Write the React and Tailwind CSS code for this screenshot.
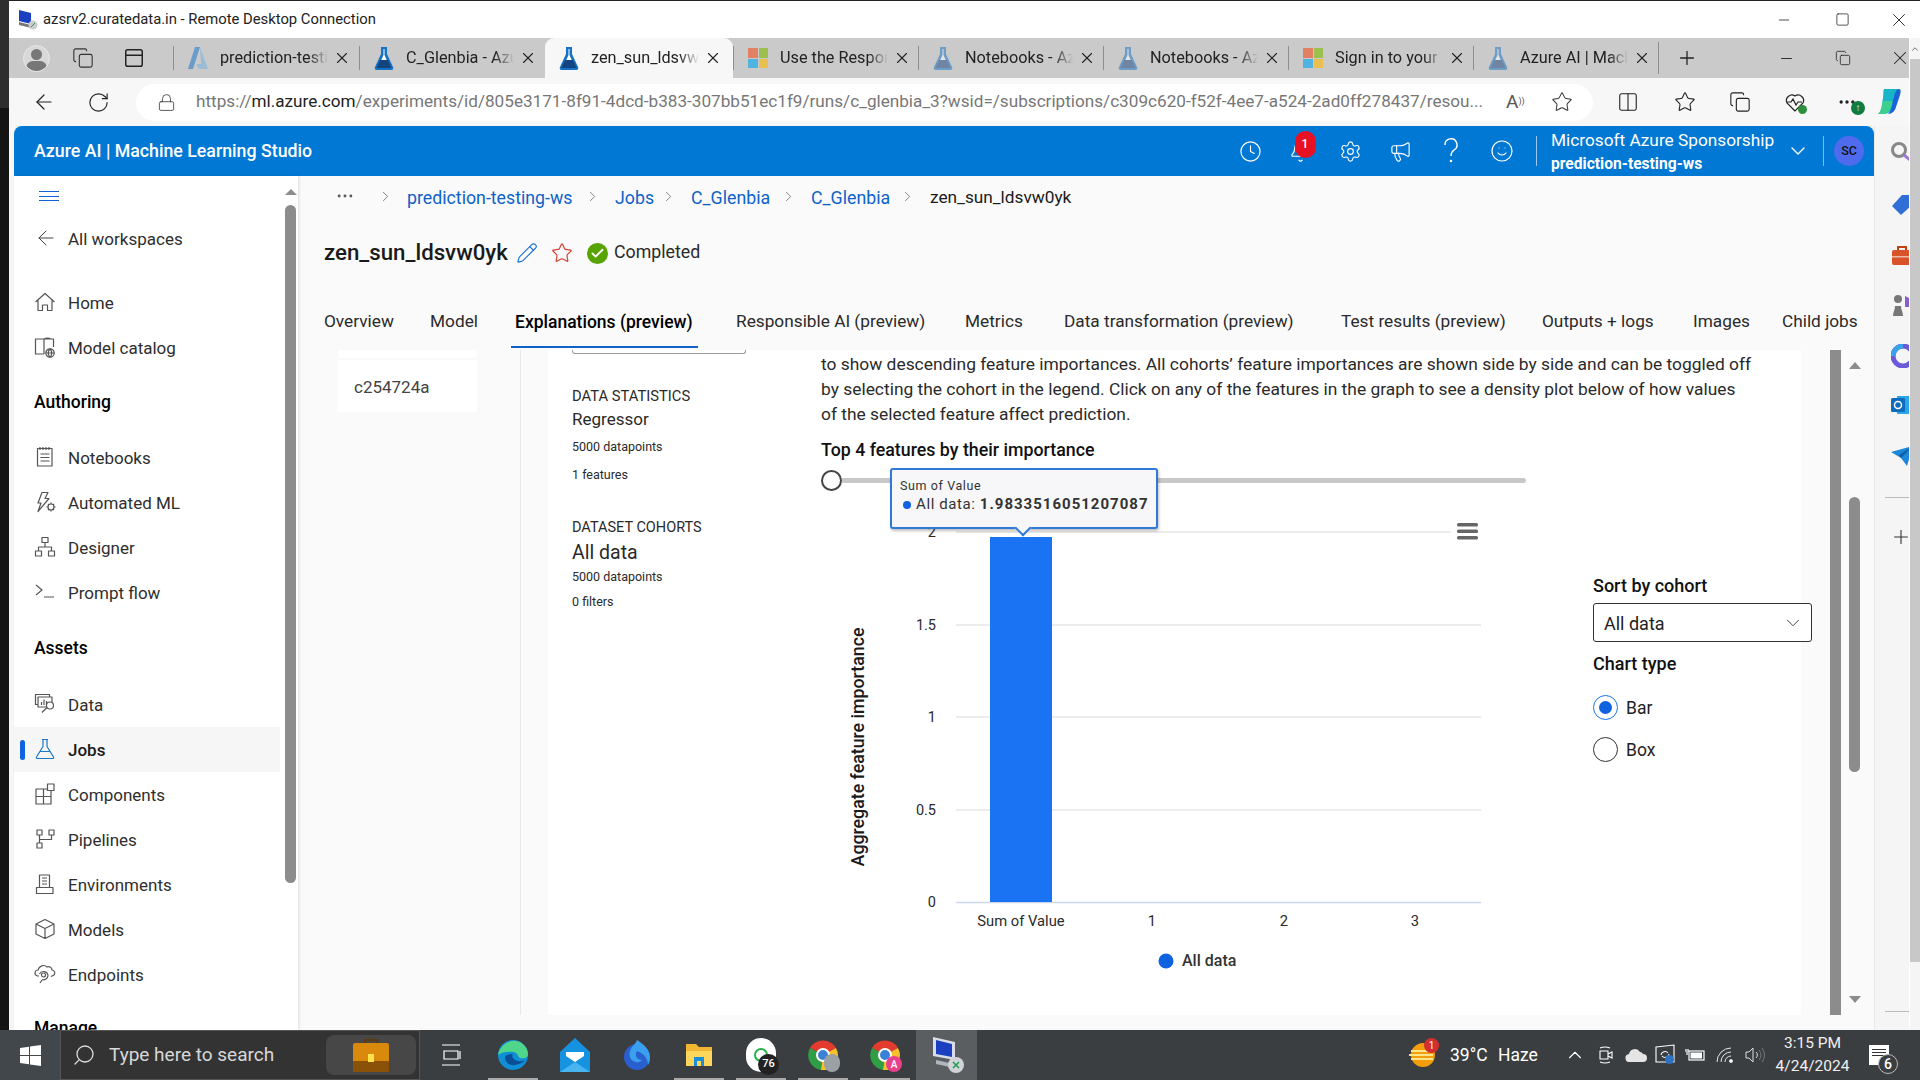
import React from "react";
import { X, Minus, Square, Plus, ArrowLeft, RotateCw, Lock, Star, Clock, Bell, Settings, Megaphone, Smile, ChevronDown, ChevronRight, ChevronUp, Search, Pencil, Check, Copy, PanelTop, Columns2, Ellipsis } from "lucide-react";

const Flask = ({ dim }) => (
  <svg width="20" height="24" viewBox="0 0 20 24" className={dim ? "opacity-50" : ""}>
    <path d="M7 1h6v7l6 13a2 2 0 0 1-2 3H3a2 2 0 0 1-2-3L7 8z" fill="#1572c4" />
    <path d="M9.5 3h1v6l2.2 5H7.3L9.5 9z" fill="#fff" />
    <path d="M6 14h8l3.6 8H2.4z" fill="#14447f" />
  </svg>
);
const AzureA = () => (
  <svg width="20" height="24" viewBox="0 0 20 24" className="opacity-60">
    <path d="M7 1h5L5 23H0z" fill="#2a7fc9" />
    <path d="M12 1l8 22h-9l-3-5h5z" fill="#7db4e0" />
  </svg>
);
const MsLogo = () => (
  <div className="grid grid-cols-2 gap-[1px] w-[20px] h-[20px] opacity-60">
    <div className="bg-[#f25022]" /><div className="bg-[#7fba00]" /><div className="bg-[#00a4ef]" /><div className="bg-[#ffb900]" />
  </div>
);

const tabs = [
  { t: "prediction-testing-ws", ic: <AzureA />, w: "w-[186px]" },
  { t: "C_Glenbia - Azure AI", ic: <Flask />, w: "w-[186px]" },
  { t: "zen_sun_ldsvw0yk - Azure", ic: <Flask />, w: "w-[188px]", active: true },
  { t: "Use the Responsible AI", ic: <MsLogo />, w: "w-[185px]" },
  { t: "Notebooks - Azure AI", ic: <Flask dim />, w: "w-[185px]" },
  { t: "Notebooks - Azure AI", ic: <Flask dim />, w: "w-[185px]" },
  { t: "Sign in to your account", ic: <MsLogo />, w: "w-[185px]" },
  { t: "Azure AI | Machine Learning", ic: <Flask dim />, w: "w-[185px]" },
];

const S = ({ children, c = "#555" }) => (
  <svg width="22" height="22" viewBox="0 0 22 22" fill="none" stroke={c} strokeWidth="1.2" strokeLinejoin="round">{children}</svg>
);
const icons = {
  home: <S><path d="M1.5 11 11 2.5 20.5 11M4 9v10.5h4.5V14h5v5.5H18V9" /></S>,
  catalog: <S><path d="M10 18H1.5V3H10v15M10 3h9.5v8M10 3c2-1 5-1 7 0" /><circle cx="16" cy="17" r="4.2" /><path d="M11.8 17h8.4M16 12.8c-2.4 2.8-2.4 5.600 0 8.400M16 12.800c2.400 2.800 2.400 5.600 0 8.400" /></S>,
  notebooks: <S><rect x="3.500" y="2.500" width="14.500" height="17.500" /><path d="M6.500 8h9M6.500 11.500h9M6.500 15h9M6 1v3M9 1v3M12 1v3M15 1v3" /></S>,
  automl: <S><path d="M8 1.500h6l-3 6h4L4 20.500l3-8.500H4zM14 1.500" /><circle cx="17" cy="16" r="3" /><path d="M17 11.500V13M17 19v1.500M12.500 16H14M20 16h1.500M14 13l1 1M19 18l1 1M20 13l-1 1M15 18l-1 1" /></S>,
  designer: <S><rect x="8" y="1.500" width="6" height="5" /><rect x="1.500" y="15" width="6" height="5" /><rect x="14.500" y="15" width="6" height="5" /><path d="M11 6.500V11M4.500 15v-4h13v4" /></S>,
  prompt: <S><path d="M2 4l6 5-6 5M10 16h10" /></S>,
  data: <S><rect x="1.500" y="1.500" width="14" height="10" /><rect x="4" y="4" width="14" height="10" fill="#fff" /><path d="M7.500 12V9M10 12V6.500M12.500 12V8M8 19.500l5-5" /><circle cx="16" cy="12.500" r="3.500" fill="#fff" /></S>,
  jobs: <S c="#1a76c8"><path d="M8 1.500h6M9 1.500v7L2.500 19a1 1 0 0 0 1 1.500h15a1 1 0 0 0 1-1.500L13 8.500v-7M6 13.500h10" /></S>,
  components: <S><rect x="2" y="6" width="15" height="15" /><path d="M9.500 6v15M2 13.500h15" /><rect x="13.500" y="1" width="6.500" height="6.500" fill="#fff" /></S>,
  pipelines: <S><rect x="3" y="2" width="5" height="5" /><rect x="15" y="2" width="5" height="5" /><rect x="3" y="15" width="5" height="5" /><path d="M5.500 7v8M5.500 11.500h12V7" /></S>,
  env: <S><path d="M5.500 14.500V2h10v12.500M2.500 20.500v-6h16.500v6zM8 5h5M8 8h5M8 11h5" /></S>,
  models: <S><path d="M11 1.500 20 6v10l-9 4.500L2 16V6zM2 6l9 4.500L20 6M11 10.500v10" /></S>,
  endpoints: <S><path d="M5 13H4a3 3 0 0 1 0-6c1-4 6-6 9-3 3-1 5 1 5 3a3 3 0 0 1 2 5l-3 1.500" /><circle cx="9.500" cy="12" r="2" /><path d="M5.500 11a4.500 4.500 0 0 1 8.500 1.500 4.500 4.500 0 0 1-6 4M8 17l-2 3" /></S>,
};

const NavRow = ({ ic, label, active }) => (
  <div className={`relative flex items-center h-[45px] pl-[20px] shrink-0 ${active ? "bg-[#f6f6f6]" : ""}`}>
    {active && <div className="absolute left-[6px] top-[13px] w-[5px] h-[20px] rounded-[3px] bg-[#0f62e0]" />}
    <div className="w-[34px] shrink-0 flex -mt-[2px]">{icons[ic]}</div>
    <span className={`pt-[2px] text-[17px] whitespace-nowrap ${active ? "font-medium text-[#1a1a1a]" : "text-[#2e2e2e]"}`}>{label}</span>
  </div>
);
const NavHead = ({ label, cls }) => (
  <div className={`flex items-center h-[45px] pl-[20px] pt-[2px] shrink-0 text-[17.500px] font-medium text-black ${cls}`}>{label}</div>
);

const Sidebar = () => (
  <div className="w-[284px] shrink-0 flex bg-white shadow-[1px_0_3px_rgba(0,0,0,0.12)] z-10">
    <div className="w-[266px] shrink-0 flex flex-col overflow-hidden">
      <div className="h-[40px] shrink-0 pl-[25px] pt-[15px] flex flex-col gap-[3.500px]">
        <div className="w-[20px] h-[1px] bg-[#0f5fd6]" /><div className="w-[20px] h-[1px] bg-[#0f5fd6]" /><div className="w-[20px] h-[1px] bg-[#0f5fd6]" />
      </div>
      <div className="flex items-center h-[45px] pl-[20px] shrink-0">
        <div className="w-[34px] shrink-0 -mt-[2px]"><ArrowLeft size={24} strokeWidth={1} color="#444" /></div>
        <span className="pt-[2px] text-[17px] text-[#2e2e2e]">All workspaces</span>
      </div>
      <div className="h-[19px] shrink-0" />
      <NavRow ic="home" label="Home" />
      <NavRow ic="catalog" label="Model catalog" />
      <NavHead label="Authoring" cls="mt-[9px]" />
      <div className="h-[11px] shrink-0" />
      <NavRow ic="notebooks" label="Notebooks" />
      <NavRow ic="automl" label="Automated ML" />
      <NavRow ic="designer" label="Designer" />
      <NavRow ic="prompt" label="Prompt flow" />
      <NavHead label="Assets" cls="mt-[10px]" />
      <div className="h-[12px] shrink-0" />
      <NavRow ic="data" label="Data" />
      <NavRow ic="jobs" label="Jobs" active />
      <NavRow ic="components" label="Components" />
      <NavRow ic="pipelines" label="Pipelines" />
      <NavRow ic="env" label="Environments" />
      <NavRow ic="models" label="Models" />
      <NavRow ic="endpoints" label="Endpoints" />
      <NavHead label="Manage" cls="mt-[8px]" />
    </div>
    <div className="w-[18px] shrink-0 flex flex-col items-center pl-[3px] pt-[13px]">
      <div className="w-0 h-0 border-x-[6.500px] border-x-transparent border-b-[6px] border-b-[#8c8c8c]" />
      <div className="w-[11px] h-[678px] mt-[10px] rounded-[6px] bg-[#8c8c8c]" />
    </div>
  </div>
);

const crumbs = [
  { t: "prediction-testing-ws", w: "w-[177px]" },
  { t: "Jobs", w: "w-[45px]" },
  { t: "C_Glenbia", w: "w-[89px]" },
  { t: "C_Glenbia", w: "w-[88px]" },
];
const Chev = () => <ChevronRight size={17} strokeWidth={1} color="#555" className="shrink-0 -mt-[4px]" />;

const Breadcrumb = () => (
  <div className="h-[44px] shrink-0 flex items-center text-[17.750px] pl-[37px] text-[#0f62c8]">
    <Ellipsis size={20} strokeWidth={1.500} color="#555" className="-mt-[4px] shrink-0" />
    <div className="w-[22px] shrink-0" />
    <Chev />
    <div className="w-[13px] shrink-0" />
    {crumbs.map((c, i) => (
      <div key={i} className="flex items-center shrink-0">
        <span className={`${c.w} whitespace-nowrap`}>{c.t}</span>
        <Chev />
        <div className="w-[14px] shrink-0" />
      </div>
    ))}
    <span className="text-[#1a1a1a] whitespace-nowrap text-[17.250px]">zen_sun_ldsvw0yk</span>
  </div>
);

const TitleRow = () => (
  <div className="h-[46px] mt-[10px] shrink-0 flex items-center pl-[26px]">
    <span className="w-[192px] shrink-0 text-[22.250px] font-medium text-[#1a1a1a] whitespace-nowrap">zen_sun_ldsvw0yk</span>
    <Pencil size={22} strokeWidth={1.200} color="#1a6fd8" className="shrink-0" />
    <div className="w-[13px] shrink-0" />
    <Star size={22} strokeWidth={1.300} color="#d1402f" className="shrink-0" />
    <div className="w-[14px] shrink-0" />
    <div className="w-[21px] h-[21px] rounded-full bg-[#57a300] flex items-center justify-center shrink-0"><Check size={15} strokeWidth={3} color="#fff" /></div>
    <span className="ml-[6px] text-[17.750px] text-[#2a2a2a] -mt-[1px]">Completed</span>
  </div>
);

const pageTabs = [
  { t: "Overview", w: "w-[106px]" },
  { t: "Model", w: "w-[85px]" },
  { t: "Explanations (preview)", w: "w-[221px]", active: true },
  { t: "Responsible AI (preview)", w: "w-[229px]" },
  { t: "Metrics", w: "w-[99px]" },
  { t: "Data transformation (preview)", w: "w-[277px]" },
  { t: "Test results (preview)", w: "w-[201px]" },
  { t: "Outputs + logs", w: "w-[151px]" },
  { t: "Images", w: "w-[89px]" },
  { t: "Child jobs", w: "w-[92px]" },
];

const PageTabs = () => (
  <div className="h-[54px] mt-[20px] shrink-0 flex pl-[26px] text-[17.250px] text-[#2a2a2a]">
    {pageTabs.map((t, i) => (
      <div key={i} className={`${t.w} shrink-0 h-[52px] flex items-center whitespace-nowrap`}>
        {t.active ? (
          <span className="h-[52px] w-[187px] -ml-[4px] pl-[4px] pt-[2px] flex items-center text-[17.500px] font-medium text-black border-b-[2.500px] border-[#0f62c8]">{t.t}</span>
        ) : t.t}
      </div>
    ))}
  </div>
);

const InfoLine = ({ cls, children }) => <div className={`flex items-center shrink-0 text-[#2a2a2a] whitespace-nowrap ${cls}`}>{children}</div>;

const InfoCol = () => (
  <div className="w-[273px] shrink-0 pl-[24px] flex flex-col">
    <div className="w-[174px] h-[4px] shrink-0 border-x border-b border-[#9a9a9a] rounded-b-[3px]" />
    <InfoLine cls="h-[20px] mt-[32px] text-[14.750px]">DATA STATISTICS</InfoLine>
    <InfoLine cls="h-[24px] mt-[2px] text-[17px]">Regressor</InfoLine>
    <InfoLine cls="h-[20px] mt-[5px] text-[12.500px]">5000 datapoints</InfoLine>
    <InfoLine cls="h-[20px] mt-[8px] text-[12.500px]">1 features</InfoLine>
    <InfoLine cls="h-[20px] mt-[33px] text-[14.500px]">DATASET COHORTS</InfoLine>
    <InfoLine cls="h-[24px] mt-[3px] text-[19.500px]">All data</InfoLine>
    <InfoLine cls="h-[20px] mt-[2px] text-[12.500px]">5000 datapoints</InfoLine>
    <InfoLine cls="h-[20px] mt-[5px] text-[12.500px]">0 filters</InfoLine>
  </div>
);

const GRID = [[532, "2"], [625, "1.5"], [717, "1"], [810, "0.5"]];

const Chart = () => (
  <svg width="700" height="510" viewBox="821 491 700 510" className="block font-['Roboto',sans-serif]">
    {GRID.map(([y, l]) => (
      <g key={l}>
        <line x1="956" x2={y === 532 ? 1451 : 1481} y1={y} y2={y} stroke="#e6e6e6" strokeWidth="1.500" />
        <text x="936" y={y + 5} textAnchor="end" fontSize="14.500" fill="#2a2a2a">{l}</text>
      </g>
    ))}
    <line x1="956" x2="1481" y1="902.500" y2="902.500" stroke="#ccd6eb" strokeWidth="1.500" />
    <text x="936" y="907" textAnchor="end" fontSize="14.500" fill="#2a2a2a">0</text>
    <rect x="990" y="537" width="62" height="365" fill="#1a73f2" />
    {[["Sum of Value", 1021], ["1", 1152], ["2", 1284], ["3", 1415]].map(([l, x]) => (
      <text key={l} x={x} y="926" textAnchor="middle" fontSize="14.750" fill="#2a2a2a">{l}</text>
    ))}
    <text transform="translate(864 747) rotate(-90)" textAnchor="middle" fontSize="17.750" fontWeight="500" fill="#1a1a1a">Aggregate feature importance</text>
    <circle cx="1166" cy="961" r="7.500" fill="#0f62e0" />
    <text x="1182" y="966" fontSize="16" fontWeight="500" fill="#333">All data</text>
    <rect x="1457" y="523" width="21" height="3.500" rx="1.500" fill="#666" />
    <rect x="1457" y="529.500" width="21" height="3.500" rx="1.500" fill="#666" />
    <rect x="1457" y="536" width="21" height="3.500" rx="1.500" fill="#666" />
  </svg>
);

const Tooltip = () => (
  <div className="absolute left-[69px] -top-[1px] w-[268px] h-[61px] z-10 bg-[#f7f7f9] border-2 border-[#2f7ad6] rounded-[3px] shadow-[1px_2px_3px_rgba(0,0,0,0.25)] pl-[8px] pt-[7px]">
    <div className="text-[12.500px] leading-[18px] tracking-[0.6px] text-[#333]">Sum of Value</div>
    <div className="flex items-center text-[15px] leading-[19px] tracking-[0.6px] text-[#333] whitespace-nowrap">
      <span className="w-[8px] h-[8px] rounded-full bg-[#0f62e0] ml-[3px] mr-[5px] shrink-0" />
      All data:&nbsp;<span className="font-bold tracking-[1px]">1.9833516051207087</span>
    </div>
    <div className="absolute left-[125px] bottom-[-7px] w-[12px] h-[12px] rotate-45 bg-[#f7f7f9] border-r-2 border-b-2 border-[#2f7ad6]" />
  </div>
);

const Radio = ({ on, label, cls }) => (
  <div className={`flex items-center h-[26px] ${cls}`}>
    <div className={`w-[25px] h-[25px] rounded-full border-[1.500px] flex items-center justify-center shrink-0 ${on ? "border-[#1a73e8]" : "border-[#333]"}`}>
      {on && <div className="w-[13px] h-[13px] rounded-full bg-[#0f62e0]" />}
    </div>
    <span className="ml-[8px] pt-[2px] text-[17.500px] text-[#222]">{label}</span>
  </div>
);

const Controls = () => (
  <div className="w-[219px] shrink-0 flex flex-col pt-[104px]">
    <div className="h-[24px] flex items-center text-[18px] font-medium text-[#111]">Sort by cohort</div>
    <div className="h-[39px] mt-[6px] border border-[#333] rounded-[3px] flex items-center justify-between pl-[10px] pr-[7px] pt-[1px] bg-white text-[18px] text-[#222]">
      All data
      <ChevronDown size={22} strokeWidth={1} color="#333" />
    </div>
    <div className="h-[24px] mt-[9px] flex items-center text-[18px] font-medium text-[#111]">Chart type</div>
    <Radio on label="Bar" cls="mt-[19px]" />
    <Radio label="Box" cls="mt-[16px]" />
  </div>
);

const Body = () => (
  <div className="flex-1 flex min-h-0">
    <div className="w-[223px] h-[665px] shrink-0 border-r border-[#e8e8e8] pl-[40px]">
      <div className="w-[139px] h-[8px] bg-white" />
      <div className="w-[139px] h-[52px] mt-[2px] bg-white flex items-center pl-[16px] pt-[3px] text-[17px] text-[#444]">c254724a</div>
    </div>
    <div className="w-[27px] shrink-0" />
    <div className="w-[1253px] h-[665px] shrink-0 bg-white flex">
      <InfoCol />
      <div className="w-[980px] shrink-0 flex flex-col pt-[2px]">
        <p className="w-[950px] text-[17.400px] leading-[25px] text-[#2a2a2a]">
          to show descending feature importances. All cohorts’ feature importances are shown side by side and can be toggled off<br />
          by selecting the cohort in the legend. Click on any of the features in the graph to see a density plot below of how values<br />
          of the selected feature affect prediction.
        </p>
        <div className="h-[24px] mt-[11px] flex items-center text-[17.800px] font-medium text-[#111]">Top 4 features by their importance</div>
        <div className="flex mt-[7px]">
          <div className="relative w-[772px] shrink-0">
            <Tooltip />
            <div className="h-[22px] w-[705px] flex items-center">
              <div className="w-[21px] h-[21px] rounded-full border-2 border-[#444] bg-white shrink-0 z-[1]" />
              <div className="flex-1 h-[5px] rounded-r-[3px] bg-[#c8c8c8]" />
            </div>
            <Chart />
          </div>
          <Controls />
        </div>
      </div>
    </div>
    <div className="w-[29px] shrink-0" />
    <div className="w-[11px] h-[665px] shrink-0 bg-[#8c8c8c]" />
    <div className="w-[8px] shrink-0" />
    <div className="w-[11px] h-[665px] shrink-0 flex flex-col items-center">
      <div className="mt-[12px] w-0 h-0 border-x-[6.500px] border-x-transparent border-b-[7px] border-b-[#8c8c8c] shrink-0" />
      <div className="mt-[128px] w-[11px] h-[275px] rounded-[6px] bg-[#8c8c8c] shrink-0" />
      <div className="mt-auto mb-[12px] w-0 h-0 border-x-[6.500px] border-x-transparent border-t-[7px] border-t-[#8c8c8c] shrink-0" />
    </div>
  </div>
);

const HeaderBtn = ({ w, children }) => <div className={`${w} shrink-0 flex justify-center`}>{children}</div>;

const AppHeader = () => (
  <div className="h-[50px] shrink-0 bg-[#0078d4] rounded-t-[8px] flex items-center pl-[20px] text-white">
    <span className="text-[17.750px] font-medium w-[1191px] shrink-0 whitespace-nowrap">Azure AI | Machine Learning Studio</span>
    <HeaderBtn w="w-[50px]"><Clock size={23} strokeWidth={1.200} /></HeaderBtn>
    <HeaderBtn w="w-[50px]">
      <div className="relative">
        <Bell size={23} strokeWidth={1.200} />
        <div className="absolute left-[6px] -top-[9px] w-[21px] h-[27px] rounded-full bg-[#e81123] flex items-center justify-center text-[12px] font-medium">1</div>
      </div>
    </HeaderBtn>
    <HeaderBtn w="w-[50px]"><Settings size={23} strokeWidth={1.200} /></HeaderBtn>
    <HeaderBtn w="w-[50px]"><Megaphone size={23} strokeWidth={1.200} /></HeaderBtn>
    <HeaderBtn w="w-[52px]"><svg width="16" height="26" viewBox="0 0 16 26" fill="none" stroke="#fff" strokeWidth="1.400"><path d="M2 7a6 6 0 1 1 9 5c-2 1.500-3 2.500-3 6" /><circle cx="8" cy="23" r=".6" fill="#fff" /></svg></HeaderBtn>
    <HeaderBtn w="w-[50px]"><Smile size={24} strokeWidth={1.200} /></HeaderBtn>
    <div className="w-[1px] h-[30px] bg-white/60 ml-[9px] shrink-0" />
    <div className="ml-[14px] w-[227px] shrink-0 flex flex-col">
      <span className="text-[17.250px] leading-[26px] whitespace-nowrap">Microsoft Azure Sponsorship</span>
      <span className="text-[15.600px] leading-[22px] font-bold whitespace-nowrap">prediction-testing-ws</span>
    </div>
    <ChevronDown size={24} strokeWidth={1.400} className="shrink-0 ml-[8px]" />
    <div className="w-[1px] h-[30px] bg-white/50 ml-[13px] shrink-0" />
    <div className="ml-[10px] w-[30px] h-[30px] rounded-full bg-[#4f6bed] text-[#111] flex items-center justify-center text-[12.500px] font-medium shrink-0">SC</div>
  </div>
);

const TabItem = ({ t }) => (
  <div className={`${t.w} shrink-0 relative flex items-center pl-[14px] ${t.active ? "bg-[#f7f7f7] rounded-t-[9px] self-stretch" : "border-l border-[#8e8e8e] my-[4px]"}`}>
    <div className="w-[32px] shrink-0 flex">{t.ic}</div>
    <span className="w-[108px] shrink-0 overflow-hidden whitespace-nowrap text-[16.250px] text-[#222] [mask-image:linear-gradient(to_right,black_82%,transparent)]">{t.t}</span>
    <X size={18} strokeWidth={1.500} color="#222" className="ml-[5px] shrink-0" />
  </div>
);

const TabStrip = () => (
  <div className="h-[40px] shrink-0 bg-[#cacaca] flex items-center">
    <div className="w-[164px] shrink-0 flex items-center">
      <div className="ml-[14px] w-[27px] h-[27px] rounded-full bg-[#d8d8d8] border border-[#e8e8e8] overflow-hidden flex flex-col items-center shrink-0">
        <div className="w-[11px] h-[11px] rounded-full bg-[#777] mt-[3px] shrink-0" />
        <div className="w-[21px] h-[14px] rounded-full bg-[#777] mt-[1px] shrink-0" />
      </div>
      <Copy size={22} strokeWidth={1.200} color="#333" className="ml-[22px] shrink-0" />
      <PanelTop size={22} strokeWidth={1.600} color="#222" className="ml-[29px] shrink-0" />
    </div>
    {tabs.map((t, i) => <TabItem key={i} t={t} />)}
    <div className="border-l border-[#8e8e8e] self-stretch my-[4px]" />
    <Plus size={22} strokeWidth={1.400} color="#222" className="ml-[17px] shrink-0" />
    <Minus size={17} strokeWidth={1.300} color="#222" className="ml-[80px] shrink-0" />
    <Copy size={16} strokeWidth={1.200} color="#222" className="ml-[40px] shrink-0" />
    <X size={22} strokeWidth={1.100} color="#222" className="ml-[38px] shrink-0" />
  </div>
);

const Toolbar = () => (
  <div className="h-[48px] shrink-0 bg-[#f7f7f7] flex items-center">
    <ArrowLeft size={24} strokeWidth={1.200} color="#222" className="ml-[23px] shrink-0" />
    <RotateCw size={23} strokeWidth={1.200} color="#222" className="ml-[31px] shrink-0" />
    <div className="ml-[26px] w-[1457px] h-[37px] rounded-full bg-white flex items-center shrink-0">
      <Lock size={19} strokeWidth={1.100} color="#444" className="ml-[21px] shrink-0" />
      <span className="ml-[20px] w-[1296px] shrink-0 text-[17.150px] whitespace-nowrap overflow-hidden text-[#777]">https://<span className="text-[#222]">ml.azure.com</span>/experiments/id/805e3171-8f91-4dcd-b383-307bb51ec1f9/runs/c_glenbia_3?wsid=/subscriptions/c309c620-f52f-4ee7-a524-2ad0ff278437/resou...</span>
      <span className="ml-[14px] text-[19px] leading-[24px] text-[#555] shrink-0">A<sup className="text-[9px]">))</sup></span>
      <Star size={22} strokeWidth={1.100} color="#333" className="ml-[26px] shrink-0" />
    </div>
    <Columns2 size={22} strokeWidth={1.200} color="#222" className="ml-[24px] shrink-0" />
    <Star size={22} strokeWidth={1.200} color="#222" className="ml-[35px] shrink-0" />
    <Copy size={22} strokeWidth={1.200} color="#222" className="ml-[33px] shrink-0" />
    <div className="ml-[33px] relative shrink-0 w-[22px] h-[22px] flex">
      <svg width="22" height="22" viewBox="0 0 22 22" fill="none" stroke="#222" strokeWidth="1.200"><path d="M11 20 3 12a5.500 5.500 0 0 1 8-7 5.500 5.500 0 0 1 8 7zM3 11h4l2-3 3 6 2-3h4" /></svg>
      <div className="absolute -right-[1px] -bottom-[1px] w-[9px] h-[9px] rounded-full bg-[#2c8f3c]" />
    </div>
    <div className="ml-[31px] relative shrink-0 w-[22px] h-[22px] flex items-center">
      <Ellipsis size={20} color="#222" />
      <div className="absolute left-[14px] top-[10px] w-[14px] h-[14px] rounded-full bg-[#107c41] text-white text-[10px] leading-[14px] text-center">↑</div>
    </div>
    <svg width="24" height="28" viewBox="0 0 24 28" className="ml-[18px] shrink-0">
      <path d="M7 1h15c-4 3-4 10-6 17-1 4-4 8-9 8H1c4-3 4-11 5-16 .500-4 0-7 1-9z" fill="#17b5c8" />
      <path d="M1 26c4-3 4-9 5-13h10c-1 6-4 13-9 13z" fill="#3ecf8e" />
      <path d="M22 1c2 0 2 3 1 6l-4 12c-1 4-4 7-8 7 4-3 4-12 6-17 .500-3 2-8 5-8z" fill="#1a63d8" />
    </svg>
  </div>
);

const Edge = ({ cls, children }) => (
  <div className={`shrink-0 pl-[16px] overflow-hidden ${cls}`}>{children}</div>
);

const EdgeSidebar = () => (
  <div className="w-[35px] shrink-0 bg-[#f5f5f5] border-l border-[#e8e8e8] flex flex-col overflow-hidden">
    <Edge cls="mt-[16px]"><svg width="22" height="22" viewBox="0 0 22 22" fill="none"><circle cx="8" cy="8" r="6.500" stroke="#888" strokeWidth="3" /><path d="M13 13l6 5" stroke="#9a78d8" strokeWidth="3" /></svg></Edge>
    <Edge cls="mt-[30px]"><svg width="22" height="22" viewBox="0 0 22 22"><path d="M11 1h10v10L10 21 1 12z" fill="#2f6fd6" /></svg></Edge>
    <Edge cls="mt-[30px]"><svg width="22" height="20" viewBox="0 0 22 20"><path d="M7 4V1h8v3" fill="none" stroke="#c2410c" strokeWidth="2" /><rect x="1" y="4" width="20" height="15" rx="2" fill="#d8522a" /><rect x="1" y="10" width="20" height="1.500" fill="#fff" opacity=".6" /></svg></Edge>
    <Edge cls="mt-[28px]"><svg width="22" height="24" viewBox="0 0 22 24"><circle cx="7" cy="5" r="4" fill="#777" /><path d="M2 22c0-4 2-6 2-10h6c0 4 2 6 2 10z" fill="#777" /><path d="M14 2l6 3v8h-6z" fill="#8a5cd0" /></svg></Edge>
    <Edge cls="mt-[26px]"><svg width="22" height="24" viewBox="0 0 22 24"><circle cx="12" cy="12" r="10" fill="none" stroke="#6a5ad8" strokeWidth="5" /><path d="M2 12a10 10 0 0 1 10-10" fill="none" stroke="#3aa0e8" strokeWidth="5" /></svg></Edge>
    <Edge cls="mt-[26px]"><svg width="22" height="22" viewBox="0 0 22 22"><rect x="6" y="2" width="16" height="18" fill="#28a8ea" /><rect x="0" y="4" width="14" height="14" rx="1.500" fill="#0f6cbd" /><circle cx="7" cy="11" r="3.500" fill="none" stroke="#fff" strokeWidth="1.500" /></svg></Edge>
    <Edge cls="mt-[30px]"><svg width="22" height="20" viewBox="0 0 22 20"><path d="M0 6 22 0l-6 20-6-8z" fill="#1b87d8" /><path d="M10 12 22 0l-14 9z" fill="#0d5fa8" /></svg></Edge>
    <div className="mt-[31px] ml-[10px] h-[1px] w-[25px] bg-[#bbb] shrink-0" />
    <Plus size={22} strokeWidth={1.200} color="#333" className="mt-[28px] ml-[15px] shrink-0" />
    <div className="mt-auto mb-[18px] ml-[10px] h-[1px] w-[25px] bg-[#bbb] shrink-0" />
  </div>
);

const EdgeIcon = ({ children }) => <div className="w-[62px] shrink-0 h-[50px] flex items-center justify-center">{children}</div>;

const Under = ({ children }) => (
  <div className="relative w-[62px] shrink-0 h-[50px] flex items-center justify-center">
    {children}
    <div className="absolute bottom-0 left-[6px] right-[6px] h-[2px] bg-[#aaa]" />
  </div>
);

const ChromeIc = ({ children }) => (
  <div className="relative w-[30px] h-[34px]">
    <svg width="30" height="30" viewBox="0 0 30 30" className="mt-[2px]">
      <path d="M15 15 2 8a15 15 0 0 1 26 0z" fill="#e33b2e" />
      <path d="M15 15 2 8a15 15 0 0 0 11 22z" fill="#2f9e44" />
      <path d="M15 15 28 8a15 15 0 0 1-15 22z" fill="#f9c02e" />
      <circle cx="15" cy="15" r="7" fill="#fff" /><circle cx="15" cy="15" r="5" fill="#3b82d6" />
    </svg>
    {children}
  </div>
);

const Taskbar = () => (
  <div className="h-[50px] shrink-0 bg-[#3b3e40] flex items-center text-white">
    <div className="w-[60px] h-full shrink-0 bg-[#41474a] flex items-center justify-center">
      <svg width="21" height="21" viewBox="0 0 21 21" fill="#fff"><path d="M0 3l9-1.300V10H0zM10 1.500 21 0v10H10zM0 11h9v8.300L0 18zM10 11h11v10l-11-1.500z" /></svg>
    </div>
    <div className="w-[360px] h-full shrink-0 bg-[#333] border border-[#555] flex items-center">
      <Search size={24} strokeWidth={1.300} color="#ddd" className="ml-[11px] shrink-0 -scale-x-100" />
      <span className="ml-[13px] w-[217px] shrink-0 text-[19px] text-[#d8d8d8] whitespace-nowrap">Type here to search</span>
      <div className="w-[90px] h-[40px] rounded-[8px] bg-[#474747] flex items-center justify-center shrink-0">
        <svg width="38" height="36" viewBox="0 0 38 36"><path d="M13 7V3h12v4" fill="none" stroke="#5b3a0c" strokeWidth="2" /><rect x="1" y="6" width="36" height="29" rx="2" fill="#d98a0c" /><rect x="1" y="24" width="36" height="11" rx="1" fill="#8a5208" /><rect x="16" y="17" width="6" height="8" fill="#ffe14d" /></svg>
      </div>
    </div>
    <EdgeIcon>
      <svg width="20" height="24" viewBox="0 0 20 24" fill="none" stroke="#fff" strokeWidth="1.200"><path d="M1 2h18M1 22h18M3 8h14v8H3zM19 8v8" /></svg>
    </EdgeIcon>
    <Under>
      <svg width="32" height="32" viewBox="0 0 32 32"><circle cx="16" cy="16" r="15" fill="#0f8fd6" /><path d="M1 16C3 6 12 1 19 2c7 1 12 7 12 13 0 4-4 5-8 4-2-1-2-5-6-6-6-1-13 0-16 3z" fill="#4fd68a" /><path d="M8 18c0 6 5 9 10 8 4-1 8-2 10-5-3 2-9 2-12-2-1-1-1-3 0-4-4 0-8 1-8 3z" fill="#0a4f96" /></svg>
    </Under>
    <EdgeIcon>
      <svg width="30" height="34" viewBox="0 0 30 34"><path d="M15 0 30 14v20H0V14z" fill="#1593e0" /><path d="M6 14h18v4l-9 6-9-6z" fill="#fff" /><path d="M0 34 15 24l15 10z" fill="#48b5f0" /></svg>
    </EdgeIcon>
    <EdgeIcon>
      <svg width="30" height="34" viewBox="0 0 30 34"><circle cx="15" cy="19" r="13" fill="#2a5fd0" /><path d="M15 2c6 4 13 9 13 18 0 3-1 5-2 7 0-8-6-12-11-14-3 4 0 9 5 9-2 3-8 3-11-1-3-4-1-10 2-13 1-2 3-3 4-6z" fill="#39a0f0" /></svg>
    </EdgeIcon>
    <Under>
      <svg width="28" height="28" viewBox="0 0 28 28"><path d="M1 3h10l3 3h13v19H1z" fill="#f2b632" /><path d="M1 10h26v15H1z" fill="#ffd65c" /><rect x="9" y="16" width="10" height="9" fill="#1a8fd8" /><rect x="12" y="20" width="4" height="5" fill="#ffd65c" /></svg>
    </Under>
    <Under>
      <div className="relative w-[30px] h-[38px] flex items-center">
        <div className="w-[30px] h-[34px] rounded-full bg-white flex items-center justify-center"><div className="w-[14px] h-[14px] rounded-full border-2 border-[#25b04b]" /></div>
        <div className="absolute right-[-3px] bottom-[-1px] w-[21px] h-[21px] rounded-full bg-[#222] text-white text-[11px] font-medium flex items-center justify-center">76</div>
      </div>
    </Under>
    <Under>
      <ChromeIc><div className="absolute right-[-2px] bottom-[0px] w-[16px] h-[18px] rounded-full bg-[#9aa0a4]" /></ChromeIc>
    </Under>
    <Under>
      <ChromeIc><div className="absolute right-[-2px] bottom-[0px] w-[16px] h-[16px] rounded-full bg-[#e8418c] text-[10px] text-white font-medium flex items-center justify-center">A</div></ChromeIc>
    </Under>
    <div className="w-[61px] h-full shrink-0 bg-[#5a5e60] flex items-center justify-center">
      <svg width="34" height="38" viewBox="0 0 34 38"><path d="M3 1l22 5v18L3 20z" fill="#d8dde8" /><path d="M6 4l16 4v13L6 18z" fill="#1a3fc0" /><path d="M6 24l18 4v4l-18-4z" fill="#b0b5bb" /><circle cx="26" cy="29" r="8" fill="#d0d4d8" /><path d="M23 32l6-6M23 26l6 6" stroke="#1f9e50" strokeWidth="1.500" /></svg>
    </div>
    <div className="flex-1" />
    <div className="w-[520px] shrink-0 flex items-center h-full">
      <div className="w-[46px] shrink-0 relative flex justify-center">
        <svg width="28" height="26" viewBox="0 0 28 26"><circle cx="14" cy="13" r="12" fill="#f59e0b" /><path d="M2 9h22M0 13h24M2 17h22" stroke="#fde68a" strokeWidth="2" /></svg>
        <div className="absolute left-[24px] -top-[4px] w-[15px] h-[15px] rounded-full bg-[#d32f2f] text-[10px] text-white flex items-center justify-center">1</div>
      </div>
      <span className="ml-[4px] w-[48px] shrink-0 text-[17.500px]">39°C</span>
      <span className="w-[62px] shrink-0 text-[17.500px]">Haze</span>
      <div className="w-[30px] shrink-0 flex justify-center"><ChevronUp size={22} strokeWidth={1.200} /></div>
      <div className="w-[31px] shrink-0 flex justify-center"><svg width="16" height="20" viewBox="0 0 16 20" fill="none" stroke="#fff" strokeWidth="1.100"><path d="M2 3q5-2 10 0M2 17q5 2 10 0M2 6h8v8H2zM10 9l4-2v6l-4-2" /></svg></div>
      <div className="w-[29px] shrink-0 flex justify-center"><svg width="22" height="14" viewBox="0 0 22 14" fill="#e5e5e5"><path d="M5 14a4 4 0 0 1-1-8 6 6 0 0 1 11-2 4 4 0 0 1 3 2 4 4 0 0 1 0 8z" /></svg></div>
      <div className="w-[30px] shrink-0 flex justify-center relative"><svg width="20" height="22" viewBox="0 0 20 22" fill="none" stroke="#fff" strokeWidth="1.100"><path d="M1 3l18-2v17H1zM6 11a4 4 0 0 1 7-2M14 10a4 4 0 0 1-7 2" /></svg><div className="absolute left-[15px] top-[11px] w-[9px] h-[9px] rounded-full bg-[#2a73c5]" /></div>
      <div className="w-[30px] shrink-0 flex justify-center"><svg width="20" height="14" viewBox="0 0 20 14" fill="none" stroke="#fff" strokeWidth="1.200"><rect x="4" y="3" width="15" height="9" /><rect x="5.500" y="4.500" width="11.500" height="6" fill="#fff" stroke="none" /><path d="M1 1v3M3 1v3M2 4v3" /></svg></div>
      <div className="w-[30px] shrink-0 flex justify-center"><svg width="18" height="16" viewBox="0 0 18 16" fill="none" stroke="#e5e5e5" strokeWidth="1"><path d="M1 15A14 14 0 0 1 15 1M5 15A10 10 0 0 1 15 5M9 15a6 6 0 0 1 6-6" /><circle cx="15" cy="14" r="1.500" fill="#fff" /></svg></div>
      <div className="w-[30px] shrink-0 flex justify-center"><svg width="20" height="16" viewBox="0 0 20 16" fill="none" stroke="#ddd" strokeWidth="1"><path d="M1 5h3l4-4v14l-4-4H1zM11 5a4 4 0 0 1 0 6" /><path d="M14 3a8 8 0 0 1 0 10M17 1a11 11 0 0 1 0 14" stroke="#777" /></svg></div>
      <div className="w-[85px] shrink-0 flex flex-col items-center text-[15.500px] leading-[23px] text-[#f0f0f0]">
        <span>3:15 PM</span><span>4/24/2024</span>
      </div>
      <div className="relative ml-[14px] w-[20px] h-[20px] bg-white shrink-0 flex flex-col gap-[2px] px-[3px] pt-[4px]">
        <div className="h-[1px] bg-[#333]" /><div className="h-[1px] bg-[#333]" /><div className="h-[1px] bg-[#333]" />
        <div className="absolute left-[9px] top-[9px] w-[20px] h-[20px] rounded-full border border-[#bbb] bg-[#3b3e40] text-white text-[14px] font-medium flex items-center justify-center">6</div>
      </div>
    </div>
  </div>
);

export default function App() {
  return (
    <div className="w-[1920px] h-[1080px] flex flex-col overflow-hidden bg-white font-['Roboto',sans-serif]">
      <div className="flex-1 flex min-h-0">
        <div className="w-[9px] shrink-0 bg-[#141414] flex flex-col">
          <div className="h-[108px] bg-[#2e2e2e]" />
        </div>
        <div className="flex-1 min-w-0 flex flex-col border-t border-[#222]">
          <div className="h-[37px] shrink-0 bg-white flex items-center">
            <svg width="20" height="20" viewBox="0 0 20 20" className="ml-[9px] shrink-0"><path d="M1 0l12 3v11L1 11z" fill="#1a3fc0" /><path d="M1 12l12 3v3L1 15z" fill="#777" /><circle cx="15" cy="15" r="4.500" fill="#ccc" /><path d="M13 17l4-4" stroke="#1f9e50" /></svg>
            <span className="ml-[5px] text-[14.800px] text-[#222] whitespace-nowrap">azsrv2.curatedata.in - Remote Desktop Connection</span>
            <Minus size={16} strokeWidth={1.200} color="#222" className="ml-auto shrink-0" />
            <Square size={15} strokeWidth={1.200} color="#222" className="ml-[43px] shrink-0" />
            <X size={22} strokeWidth={1} color="#222" className="ml-[38px] mr-[10px] shrink-0" />
          </div>
          <div className="flex-1 min-h-0 flex">
            <div className="w-[1900px] shrink-0 flex flex-col overflow-hidden">
              <TabStrip />
              <Toolbar />
              <div className="flex-1 min-h-0 flex bg-[#f4f4f4]">
                <div className="w-[5px] shrink-0 bg-[#f7f7f7]" />
                <div className="w-[1860px] shrink-0 flex flex-col">
                  <AppHeader />
                  <div className="flex-1 min-h-0 flex">
                    <Sidebar />
                    <div className="flex-1 min-w-0 flex flex-col bg-[#fafafa]">
                      <Breadcrumb />
                      <TitleRow />
                      <PageTabs />
                      <Body />
                    </div>
                  </div>
                </div>
                <EdgeSidebar />
              </div>
            </div>
            <div className="w-[11px] shrink-0 bg-[#f5f5f5] border-l border-white flex flex-col">
              <div className="flex justify-center pt-[5px] h-[21px] shrink-0 overflow-hidden"><ChevronUp size={12} strokeWidth={2} color="#555" /></div>
              <div className="h-[903px] bg-[#c8c8c8] shrink-0" />
            </div>
          </div>
        </div>
      </div>
      <Taskbar />
    </div>
  );
}
